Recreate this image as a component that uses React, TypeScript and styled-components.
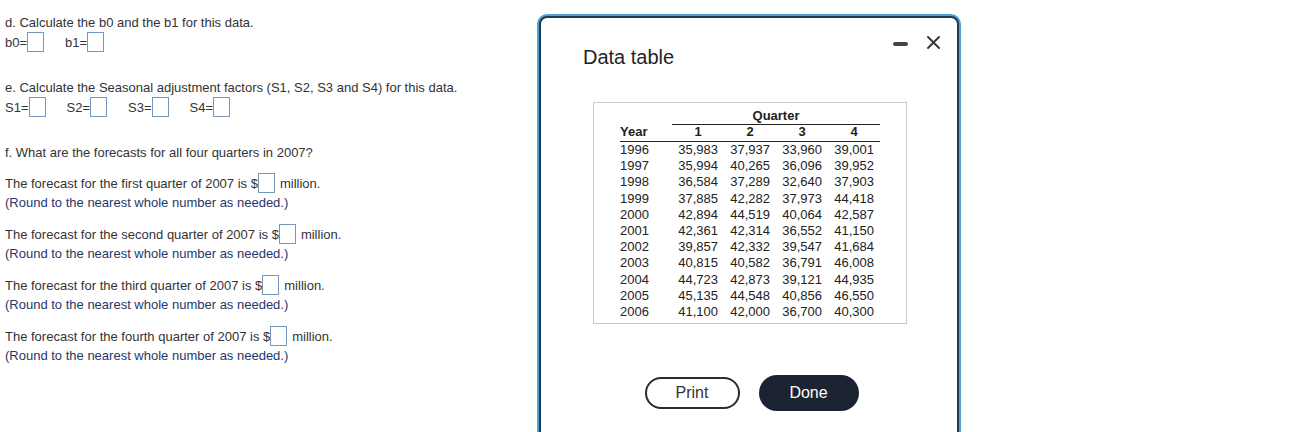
import React from "react";
import styled, { createGlobalStyle } from "styled-components";

const GlobalStyle = createGlobalStyle`
  body {
    margin: 0;
    background: #ffffff;
    font-family: "Liberation Sans", Arial, sans-serif;
  }
`;

const Page = styled.div`
  display: flex;
  height: 432px;
  overflow: hidden;
`;

// Pregunta a la izquierda
const Question = styled.div`
  width: 539px;
  flex-shrink: 0;
  box-sizing: border-box;
  padding: 13px 0 0 5px;
  color: #333333;
  font-size: 13px;
`;

const Section = styled.div<{ $gap: number }>`
  margin-top: ${(p) => p.$gap}px;
`;

const Line = styled.div`
  line-height: 19px;
  white-space: nowrap;
`;

const Hint = styled(Line)`
  color: #26386a;
`;

const AnswerRow = styled.div`
  display: flex;
  align-items: center;
  height: 20px;
  gap: 21px;
`;

const Field = styled.span`
  display: inline-flex;
  align-items: center;
  white-space: nowrap;
`;

const Box = styled.span<{ $after?: number }>`
  display: inline-block;
  width: 17px;
  height: 20px;
  box-sizing: border-box;
  border: 1px solid #7696ba;
  background: #ffffff;
  margin-right: ${(p) => p.$after ?? 0}px;
`;

// Ventana modal
const Modal = styled.div`
  width: 420px;
  height: 440px;
  flex-shrink: 0;
  box-sizing: border-box;
  margin-top: 16px;
  padding: 18px 17px 0 42px;
  border: 2px solid #1d3c58;
  border-radius: 8px;
  box-shadow: 0 0 0 2px #4fa4d6;
  background: #ffffff;
`;

const Header = styled.div`
  display: flex;
  justify-content: space-between;
  align-items: flex-start;
`;

const Title = styled.h2`
  margin: 9px 0 0 0;
  font-size: 20px;
  line-height: 24px;
  font-weight: normal;
  color: #1f1f1f;
`;

const Controls = styled.div`
  display: flex;
  align-items: center;
  gap: 19px;
  height: 13px;
`;

const Minimize = styled.span`
  display: block;
  width: 15px;
  height: 4px;
  margin-top: 3px;
  border-radius: 2px;
  background: #454545;
`;

const TableBox = styled.div`
  width: 314px;
  box-sizing: border-box;
  margin: 33px 0 0 10px;
  padding: 5px 0 3px 26px;
  border: 1px solid #c9c9c9;
`;

const Table = styled.table`
  table-layout: fixed;
  width: 260px;
  border-collapse: separate;
  border-spacing: 0;
  font-size: 13px;
  color: #222222;
`;

const Col = styled.col`
  width: 52px;
`;

const QuarterCell = styled.th`
  padding: 0;
  line-height: 16px;
  font-weight: bold;
  text-align: center;
  border-bottom: 1px solid #222222;
`;

const HeadCell = styled.th<{ $align: "left" | "center" }>`
  padding: 0 0 2px 0;
  line-height: 14px;
  font-weight: bold;
  text-align: ${(p) => p.$align};
  border-bottom: 1px solid #222222;
`;

const Cell = styled.td<{ $num?: boolean }>`
  padding: 0 ${(p) => (p.$num ? "6px" : "0")} 0 0;
  line-height: 16.2px;
  text-align: ${(p) => (p.$num ? "right" : "left")};
  white-space: nowrap;
`;

const ButtonRow = styled.div`
  display: flex;
  justify-content: center;
  align-items: center;
  gap: 19px;
  margin: 51px -17px 0 -42px;
  padding-left: 5px;
`;

const Button = styled.button<{ $primary?: boolean }>`
  box-sizing: border-box;
  width: ${(p) => (p.$primary ? 100 : 95)}px;
  height: ${(p) => (p.$primary ? 36 : 32)}px;
  border-radius: 18px;
  border: ${(p) => (p.$primary ? "none" : "2px solid #2b2b2b")};
  background: ${(p) => (p.$primary ? "#1b2331" : "#ffffff")};
  color: ${(p) => (p.$primary ? "#ffffff" : "#333333")};
  font-family: "Liberation Sans", Arial, sans-serif;
  font-size: 16px;
  padding: 0;
`;

const rows: [string, string, string, string, string][] = [
  ["1996", "35,983", "37,937", "33,960", "39,001"],
  ["1997", "35,994", "40,265", "36,096", "39,952"],
  ["1998", "36,584", "37,289", "32,640", "37,903"],
  ["1999", "37,885", "42,282", "37,973", "44,418"],
  ["2000", "42,894", "44,519", "40,064", "42,587"],
  ["2001", "42,361", "42,314", "36,552", "41,150"],
  ["2002", "39,857", "42,332", "39,547", "41,684"],
  ["2003", "40,815", "40,582", "36,791", "46,008"],
  ["2004", "44,723", "42,873", "39,121", "44,935"],
  ["2005", "45,135", "44,548", "40,856", "46,550"],
  ["2006", "41,100", "42,000", "36,700", "40,300"],
];

const quarters = ["first", "second", "third", "fourth"];

const CloseIcon = () => (
  <svg width="13" height="13" viewBox="0 0 13 13">
    <path d="M1 1 L12 12 M12 1 L1 12" stroke="#333" strokeWidth="1.8" strokeLinecap="round" />
  </svg>
);

export default function App() {
  return (
    <>
      <GlobalStyle />
      <Page>
        <Question>
          <Line>d. Calculate the b0 and the b1 for this data.</Line>
          <AnswerRow>
            <Field>
              b0=<Box />
            </Field>
            <Field>
              b1=<Box />
            </Field>
          </AnswerRow>

          <Section $gap={26}>
            <Line>e. Calculate the Seasonal adjustment factors (S1, S2, S3 and S4) for this data.</Line>
            <AnswerRow>
              {["S1", "S2", "S3", "S4"].map((s) => (
                <Field key={s}>
                  {s}=<Box />
                </Field>
              ))}
            </AnswerRow>
          </Section>

          <Section $gap={26}>
            <Line>f. What are the forecasts for all four quarters in 2007?</Line>
          </Section>

          {quarters.map((q, i) => (
            <Section key={q} $gap={i === 0 ? 11 : 12}>
              <AnswerRow>
                <Field>
                  The forecast for the {q} quarter of 2007 is $<Box $after={5} />
                  million.
                </Field>
              </AnswerRow>
              <Hint>(Round to the nearest whole number as needed.)</Hint>
            </Section>
          ))}
        </Question>

        <Modal>
          <Header>
            <Title>Data table</Title>
            <Controls>
              <Minimize />
              <CloseIcon />
            </Controls>
          </Header>

          <TableBox>
            <Table>
              <colgroup>
                <Col />
                <Col />
                <Col />
                <Col />
                <Col />
              </colgroup>
              <thead>
                <tr>
                  <th />
                  <QuarterCell colSpan={4}>Quarter</QuarterCell>
                </tr>
                <tr>
                  <HeadCell $align="left">Year</HeadCell>
                  <HeadCell $align="center">1</HeadCell>
                  <HeadCell $align="center">2</HeadCell>
                  <HeadCell $align="center">3</HeadCell>
                  <HeadCell $align="center">4</HeadCell>
                </tr>
              </thead>
              <tbody>
                {rows.map(([year, ...vals]) => (
                  <tr key={year}>
                    <Cell>{year}</Cell>
                    {vals.map((v, j) => (
                      <Cell key={j} $num>
                        {v}
                      </Cell>
                    ))}
                  </tr>
                ))}
              </tbody>
            </Table>
          </TableBox>

          <ButtonRow>
            <Button>Print</Button>
            <Button $primary>Done</Button>
          </ButtonRow>
        </Modal>
      </Page>
    </>
  );
}
